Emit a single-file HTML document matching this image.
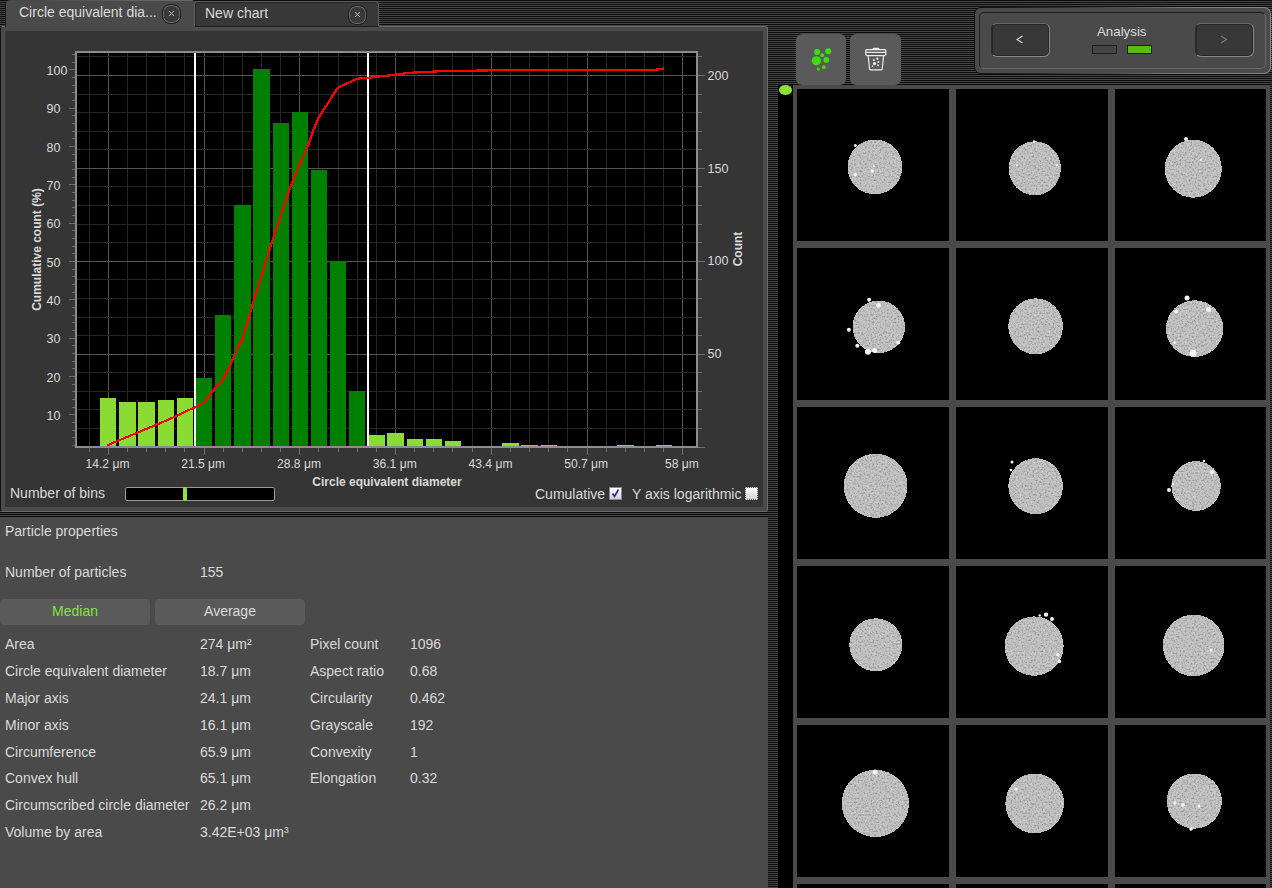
<!DOCTYPE html>
<html><head><meta charset="utf-8">
<style>
*{box-sizing:border-box}
html,body{margin:0;padding:0}
body{width:1272px;height:888px;overflow:hidden;position:relative;font-family:'Liberation Sans', sans-serif;color:#dadada;
background:repeating-linear-gradient(to bottom,#0b0b0b 0px,#0b0b0b 1px,#474747 1px,#474747 2px);}
.a{position:absolute}
.t{position:absolute;white-space:nowrap;font-size:14px;letter-spacing:0px;line-height:16px}
.cb{position:absolute;width:19px;height:20px;border-radius:8px;border:1px solid #1e1e1e;background:#393939;box-shadow:inset 0 0 0 1px #6a6a6a}
.cb svg{position:absolute;left:4.5px;top:4.5px}
.btn{position:absolute;border-radius:4px;background:#5a5a5a;text-align:center;font-size:14px;line-height:24px}
</style></head><body>

<div class="a" style="left:0px;top:26px;width:768px;height:486px;background:#4b4b4b;border-radius:3px;border:1px solid #6a6a6a;border-left-color:#141414"></div>
<div class="a" style="left:5px;top:31px;width:758px;height:476px;background:#353535"></div>
<div class="a" style="left:5px;top:0px;width:190px;height:27px;background:#1a1a1a;border-radius:5px 5px 0 0"></div>
<div class="a" style="left:6px;top:0px;width:189px;height:31px;border-radius:4px 4px 0 0;background:linear-gradient(to right,#404040,#5a5a5a 50%,#6c6c6c) top left/100% 1px no-repeat,#4a4a4a"></div>
<div class="t" style="left:19px;top:4px">Circle equivalent dia...</div>
<div class="cb" style="left:162px;top:4px"><svg width="7" height="7"><path d="M1 1 L6 6 M6 1 L1 6" stroke="#d0d0d0" stroke-width="0.9"/></svg></div>
<div class="a" style="left:194px;top:1px;width:185px;height:26px;background:#383838;border-radius:4px 4px 0 0;border:1px solid #5e5e5e;border-bottom:1px solid #1c1c1c;box-shadow:inset 1px 1px 0 #252525"></div>
<div class="t" style="left:205px;top:5px">New chart</div>
<div class="cb" style="left:348px;top:5px"><svg width="7" height="7"><path d="M1 1 L6 6 M6 1 L1 6" stroke="#d0d0d0" stroke-width="0.9"/></svg></div>
<svg width="770" height="512" style="position:absolute;left:0;top:0" font-family="Liberation Sans, sans-serif"><rect x="75" y="51" width="623" height="397" fill="#000"/><rect x="89" y="53" width="1" height="395" fill="#262626"/><rect x="108" y="53" width="1" height="395" fill="#555"/><rect x="127" y="53" width="1" height="395" fill="#262626"/><rect x="146" y="53" width="1" height="395" fill="#262626"/><rect x="165" y="53" width="1" height="395" fill="#262626"/><rect x="184" y="53" width="1" height="395" fill="#262626"/><rect x="204" y="53" width="1" height="395" fill="#555"/><rect x="223" y="53" width="1" height="395" fill="#262626"/><rect x="242" y="53" width="1" height="395" fill="#262626"/><rect x="261" y="53" width="1" height="395" fill="#262626"/><rect x="280" y="53" width="1" height="395" fill="#262626"/><rect x="299" y="53" width="1" height="395" fill="#555"/><rect x="318" y="53" width="1" height="395" fill="#262626"/><rect x="338" y="53" width="1" height="395" fill="#262626"/><rect x="357" y="53" width="1" height="395" fill="#262626"/><rect x="376" y="53" width="1" height="395" fill="#262626"/><rect x="395" y="53" width="1" height="395" fill="#555"/><rect x="414" y="53" width="1" height="395" fill="#262626"/><rect x="433" y="53" width="1" height="395" fill="#262626"/><rect x="452" y="53" width="1" height="395" fill="#262626"/><rect x="472" y="53" width="1" height="395" fill="#262626"/><rect x="491" y="53" width="1" height="395" fill="#555"/><rect x="510" y="53" width="1" height="395" fill="#262626"/><rect x="529" y="53" width="1" height="395" fill="#262626"/><rect x="548" y="53" width="1" height="395" fill="#262626"/><rect x="567" y="53" width="1" height="395" fill="#262626"/><rect x="587" y="53" width="1" height="395" fill="#555"/><rect x="606" y="53" width="1" height="395" fill="#262626"/><rect x="625" y="53" width="1" height="395" fill="#262626"/><rect x="644" y="53" width="1" height="395" fill="#262626"/><rect x="663" y="53" width="1" height="395" fill="#262626"/><rect x="682" y="53" width="1" height="395" fill="#555"/><rect x="77" y="56" width="621" height="1" fill="#262626"/><rect x="77" y="75" width="621" height="1" fill="#555"/><rect x="77" y="94" width="621" height="1" fill="#262626"/><rect x="77" y="112" width="621" height="1" fill="#262626"/><rect x="77" y="131" width="621" height="1" fill="#262626"/><rect x="77" y="149" width="621" height="1" fill="#262626"/><rect x="77" y="168" width="621" height="1" fill="#555"/><rect x="77" y="186" width="621" height="1" fill="#262626"/><rect x="77" y="205" width="621" height="1" fill="#262626"/><rect x="77" y="224" width="621" height="1" fill="#262626"/><rect x="77" y="242" width="621" height="1" fill="#262626"/><rect x="77" y="261" width="621" height="1" fill="#555"/><rect x="77" y="279" width="621" height="1" fill="#262626"/><rect x="77" y="298" width="621" height="1" fill="#262626"/><rect x="77" y="317" width="621" height="1" fill="#262626"/><rect x="77" y="335" width="621" height="1" fill="#262626"/><rect x="77" y="354" width="621" height="1" fill="#555"/><rect x="77" y="372" width="621" height="1" fill="#262626"/><rect x="77" y="391" width="621" height="1" fill="#262626"/><rect x="77" y="409" width="621" height="1" fill="#262626"/><rect x="77" y="428" width="621" height="1" fill="#262626"/><rect x="77" y="447" width="621" height="1" fill="#555"/><rect x="100" y="398" width="16" height="48" fill="#8bdc32"/><rect x="119" y="402" width="17" height="44" fill="#8bdc32"/><rect x="138" y="402" width="17" height="44" fill="#8bdc32"/><rect x="158" y="400" width="16" height="46" fill="#8bdc32"/><rect x="177" y="398" width="16" height="48" fill="#8bdc32"/><rect x="196" y="378" width="16" height="68" fill="#008000"/><rect x="215" y="315" width="16" height="131" fill="#008000"/><rect x="234" y="205" width="17" height="241" fill="#008000"/><rect x="253" y="69" width="17" height="377" fill="#008000"/><rect x="273" y="123" width="16" height="323" fill="#008000"/><rect x="292" y="112" width="16" height="334" fill="#008000"/><rect x="311" y="170" width="16" height="276" fill="#008000"/><rect x="330" y="261" width="16" height="185" fill="#008000"/><rect x="349" y="391" width="16" height="55" fill="#008000"/><rect x="369" y="435" width="16" height="11" fill="#8bdc32"/><rect x="387" y="433" width="17" height="13" fill="#8bdc32"/><rect x="407" y="439" width="16" height="7" fill="#8bdc32"/><rect x="426" y="439" width="16" height="7" fill="#8bdc32"/><rect x="445" y="441" width="16" height="5" fill="#8bdc32"/><rect x="502" y="443" width="17" height="3" fill="#8bdc32"/><rect x="521" y="445" width="17" height="1" fill="#8bdc32"/><rect x="541" y="445" width="16" height="1" fill="#8bdc32"/><rect x="617" y="445" width="17" height="1" fill="#8bdc32"/><rect x="656" y="445" width="16" height="1" fill="#8bdc32"/><rect x="194" y="53" width="2" height="393" fill="#fff"/><rect x="367" y="53" width="2" height="393" fill="#fff"/><polyline fill="none" stroke="#ff0000" stroke-width="2.2" stroke-linejoin="round" shape-rendering="crispEdges" points="107.2,445.3 168.6,419.6 193.6,407.8 196.4,406.9 203.5,402.6 207.3,398.4 214.3,389 223,379.7 229.4,367.3 233.8,356.8 241.9,339.9 246.6,325.7 250.7,310.8 254,300 270.3,247.6 290.5,186.8 298.6,166.6 308.7,144.3 313.8,128.9 318.2,118.5 323.2,110.3 337.7,87.9 356.5,78.9 361.6,78.2 370.4,78.2 372.3,77 380.4,76.4 390.5,75.3 399.3,74.1 410,72.8 423.8,72 444,71.1 520.9,69.9 654.1,69.9 663.8,68.5"/><rect x="76" y="52" width="621" height="395" fill="none" stroke="#8c8c8c" stroke-width="2"/><rect x="72" y="54" width="3" height="1" fill="#6e6e6e"/><rect x="72" y="62" width="3" height="1" fill="#6e6e6e"/><rect x="69" y="69" width="6" height="1" fill="#6e6e6e"/><rect x="72" y="77" width="3" height="1" fill="#6e6e6e"/><rect x="72" y="85" width="3" height="1" fill="#6e6e6e"/><rect x="72" y="92" width="3" height="1" fill="#6e6e6e"/><rect x="72" y="100" width="3" height="1" fill="#6e6e6e"/><rect x="69" y="108" width="6" height="1" fill="#6e6e6e"/><rect x="72" y="115" width="3" height="1" fill="#6e6e6e"/><rect x="72" y="123" width="3" height="1" fill="#6e6e6e"/><rect x="72" y="131" width="3" height="1" fill="#6e6e6e"/><rect x="72" y="138" width="3" height="1" fill="#6e6e6e"/><rect x="69" y="146" width="6" height="1" fill="#6e6e6e"/><rect x="72" y="154" width="3" height="1" fill="#6e6e6e"/><rect x="72" y="161" width="3" height="1" fill="#6e6e6e"/><rect x="72" y="169" width="3" height="1" fill="#6e6e6e"/><rect x="72" y="177" width="3" height="1" fill="#6e6e6e"/><rect x="69" y="184" width="6" height="1" fill="#6e6e6e"/><rect x="72" y="192" width="3" height="1" fill="#6e6e6e"/><rect x="72" y="200" width="3" height="1" fill="#6e6e6e"/><rect x="72" y="207" width="3" height="1" fill="#6e6e6e"/><rect x="72" y="215" width="3" height="1" fill="#6e6e6e"/><rect x="69" y="223" width="6" height="1" fill="#6e6e6e"/><rect x="72" y="230" width="3" height="1" fill="#6e6e6e"/><rect x="72" y="238" width="3" height="1" fill="#6e6e6e"/><rect x="72" y="246" width="3" height="1" fill="#6e6e6e"/><rect x="72" y="253" width="3" height="1" fill="#6e6e6e"/><rect x="69" y="261" width="6" height="1" fill="#6e6e6e"/><rect x="72" y="269" width="3" height="1" fill="#6e6e6e"/><rect x="72" y="276" width="3" height="1" fill="#6e6e6e"/><rect x="72" y="284" width="3" height="1" fill="#6e6e6e"/><rect x="72" y="292" width="3" height="1" fill="#6e6e6e"/><rect x="69" y="299" width="6" height="1" fill="#6e6e6e"/><rect x="72" y="307" width="3" height="1" fill="#6e6e6e"/><rect x="72" y="315" width="3" height="1" fill="#6e6e6e"/><rect x="72" y="322" width="3" height="1" fill="#6e6e6e"/><rect x="72" y="330" width="3" height="1" fill="#6e6e6e"/><rect x="69" y="338" width="6" height="1" fill="#6e6e6e"/><rect x="72" y="345" width="3" height="1" fill="#6e6e6e"/><rect x="72" y="353" width="3" height="1" fill="#6e6e6e"/><rect x="72" y="361" width="3" height="1" fill="#6e6e6e"/><rect x="72" y="368" width="3" height="1" fill="#6e6e6e"/><rect x="69" y="376" width="6" height="1" fill="#6e6e6e"/><rect x="72" y="384" width="3" height="1" fill="#6e6e6e"/><rect x="72" y="391" width="3" height="1" fill="#6e6e6e"/><rect x="72" y="399" width="3" height="1" fill="#6e6e6e"/><rect x="72" y="407" width="3" height="1" fill="#6e6e6e"/><rect x="69" y="414" width="6" height="1" fill="#6e6e6e"/><rect x="72" y="422" width="3" height="1" fill="#6e6e6e"/><rect x="72" y="430" width="3" height="1" fill="#6e6e6e"/><rect x="72" y="437" width="3" height="1" fill="#6e6e6e"/><rect x="72" y="445" width="3" height="1" fill="#6e6e6e"/><text x="46.5" y="75.1" font-size="12.5" fill="#dadada">100</text><text x="46.5" y="113.4" font-size="12.5" fill="#dadada">90</text><text x="46.5" y="151.8" font-size="12.5" fill="#dadada">80</text><text x="46.5" y="190.1" font-size="12.5" fill="#dadada">70</text><text x="46.5" y="228.4" font-size="12.5" fill="#dadada">60</text><text x="46.5" y="266.8" font-size="12.5" fill="#dadada">50</text><text x="46.5" y="305.1" font-size="12.5" fill="#dadada">40</text><text x="46.5" y="343.4" font-size="12.5" fill="#dadada">30</text><text x="46.5" y="381.7" font-size="12.5" fill="#dadada">20</text><text x="46.5" y="420.1" font-size="12.5" fill="#dadada">10</text><rect x="698" y="56" width="4" height="1" fill="#6e6e6e"/><rect x="698" y="75" width="7" height="1" fill="#6e6e6e"/><rect x="698" y="94" width="4" height="1" fill="#6e6e6e"/><rect x="698" y="112" width="4" height="1" fill="#6e6e6e"/><rect x="698" y="131" width="4" height="1" fill="#6e6e6e"/><rect x="698" y="149" width="4" height="1" fill="#6e6e6e"/><rect x="698" y="168" width="7" height="1" fill="#6e6e6e"/><rect x="698" y="186" width="4" height="1" fill="#6e6e6e"/><rect x="698" y="205" width="4" height="1" fill="#6e6e6e"/><rect x="698" y="224" width="4" height="1" fill="#6e6e6e"/><rect x="698" y="242" width="4" height="1" fill="#6e6e6e"/><rect x="698" y="261" width="7" height="1" fill="#6e6e6e"/><rect x="698" y="279" width="4" height="1" fill="#6e6e6e"/><rect x="698" y="298" width="4" height="1" fill="#6e6e6e"/><rect x="698" y="317" width="4" height="1" fill="#6e6e6e"/><rect x="698" y="335" width="4" height="1" fill="#6e6e6e"/><rect x="698" y="354" width="7" height="1" fill="#6e6e6e"/><rect x="698" y="372" width="4" height="1" fill="#6e6e6e"/><rect x="698" y="391" width="4" height="1" fill="#6e6e6e"/><rect x="698" y="409" width="4" height="1" fill="#6e6e6e"/><rect x="698" y="428" width="4" height="1" fill="#6e6e6e"/><rect x="698" y="447" width="7" height="1" fill="#6e6e6e"/><text x="707.5" y="79.6" font-size="12.5" fill="#dadada">200</text><text x="707.5" y="172.5" font-size="12.5" fill="#dadada">150</text><text x="707.5" y="265.4" font-size="12.5" fill="#dadada">100</text><text x="707.5" y="358.3" font-size="12.5" fill="#dadada">50</text><rect x="89" y="448" width="1" height="4" fill="#6e6e6e"/><rect x="108" y="448" width="1" height="7" fill="#6e6e6e"/><rect x="127" y="448" width="1" height="4" fill="#6e6e6e"/><rect x="146" y="448" width="1" height="4" fill="#6e6e6e"/><rect x="165" y="448" width="1" height="4" fill="#6e6e6e"/><rect x="184" y="448" width="1" height="4" fill="#6e6e6e"/><rect x="204" y="448" width="1" height="7" fill="#6e6e6e"/><rect x="223" y="448" width="1" height="4" fill="#6e6e6e"/><rect x="242" y="448" width="1" height="4" fill="#6e6e6e"/><rect x="261" y="448" width="1" height="4" fill="#6e6e6e"/><rect x="280" y="448" width="1" height="4" fill="#6e6e6e"/><rect x="299" y="448" width="1" height="7" fill="#6e6e6e"/><rect x="318" y="448" width="1" height="4" fill="#6e6e6e"/><rect x="338" y="448" width="1" height="4" fill="#6e6e6e"/><rect x="357" y="448" width="1" height="4" fill="#6e6e6e"/><rect x="376" y="448" width="1" height="4" fill="#6e6e6e"/><rect x="395" y="448" width="1" height="7" fill="#6e6e6e"/><rect x="414" y="448" width="1" height="4" fill="#6e6e6e"/><rect x="433" y="448" width="1" height="4" fill="#6e6e6e"/><rect x="452" y="448" width="1" height="4" fill="#6e6e6e"/><rect x="472" y="448" width="1" height="4" fill="#6e6e6e"/><rect x="491" y="448" width="1" height="7" fill="#6e6e6e"/><rect x="510" y="448" width="1" height="4" fill="#6e6e6e"/><rect x="529" y="448" width="1" height="4" fill="#6e6e6e"/><rect x="548" y="448" width="1" height="4" fill="#6e6e6e"/><rect x="567" y="448" width="1" height="4" fill="#6e6e6e"/><rect x="587" y="448" width="1" height="7" fill="#6e6e6e"/><rect x="606" y="448" width="1" height="4" fill="#6e6e6e"/><rect x="625" y="448" width="1" height="4" fill="#6e6e6e"/><rect x="644" y="448" width="1" height="4" fill="#6e6e6e"/><rect x="663" y="448" width="1" height="4" fill="#6e6e6e"/><rect x="682" y="448" width="1" height="7" fill="#6e6e6e"/><text x="107.5" y="467.6" text-anchor="middle" font-size="12.1" fill="#dadada">14.2 μm</text><text x="203.2" y="467.6" text-anchor="middle" font-size="12.1" fill="#dadada">21.5 μm</text><text x="299.0" y="467.6" text-anchor="middle" font-size="12.1" fill="#dadada">28.8 μm</text><text x="394.8" y="467.6" text-anchor="middle" font-size="12.1" fill="#dadada">36.1 μm</text><text x="490.5" y="467.6" text-anchor="middle" font-size="12.1" fill="#dadada">43.4 μm</text><text x="586.2" y="467.6" text-anchor="middle" font-size="12.1" fill="#dadada">50.7 μm</text><text x="682.0" y="467.6" text-anchor="middle" font-size="12.1" fill="#dadada">58 μm</text><text x="387" y="485.5" text-anchor="middle" font-size="12" font-weight="bold" fill="#dadada">Circle equivalent diameter</text><text transform="translate(41.2,249.5) rotate(-90)" text-anchor="middle" font-size="12" font-weight="bold" fill="#dadada">Cumulative count (%)</text><text transform="translate(742,249) rotate(-90)" text-anchor="middle" font-size="12" font-weight="bold" fill="#dadada">Count</text></svg>
<div class="t" style="left:10px;top:485px">Number of bins</div>
<div class="a" style="left:125px;top:487px;width:150px;height:14px;background:#000;border:1px solid #9a9a9a;border-radius:2px"></div>
<div class="a" style="left:183px;top:487px;width:4px;height:14px;background:#8ce33a;border-radius:2px"></div>
<div class="t" style="left:535px;top:486px">Cumulative</div>
<div class="a" style="left:609px;top:487px;width:13px;height:13px;background:linear-gradient(#fff,#cfd3da);border:1px solid #8a8a8a"><svg width="11" height="11" style="position:absolute;left:0;top:0"><path d="M2.5 5.5 L4.5 8.5 L8.5 1.5" stroke="#2a2a9a" stroke-width="1.6" fill="none"/></svg></div>
<div class="t" style="left:632px;top:486px">Y axis logarithmic</div>
<div class="a" style="left:745px;top:487px;width:13px;height:13px;background:linear-gradient(#fff,#cfd3da);border:1px dotted #555"></div>
<div class="a" style="left:0;top:517px;width:768px;height:371px;background:#4a4a4a"></div>
<div class="t" style="left:5px;top:523px">Particle properties</div>
<div class="t" style="left:5px;top:564px">Number of particles</div>
<div class="t" style="left:200px;top:564px">155</div>
<div class="btn" style="left:0;top:599px;width:150px;height:26px;color:#84e43a">Median</div>
<div class="btn" style="left:155px;top:599px;width:150px;height:26px;color:#dadada">Average</div>
<div class="t" style="left:5px;top:636.0px">Area</div>
<div class="t" style="left:200px;top:636.0px">274 μm²</div>
<div class="t" style="left:310px;top:636.0px">Pixel count</div>
<div class="t" style="left:410px;top:636.0px">1096</div>
<div class="t" style="left:5px;top:662.9px">Circle equivalent diameter</div>
<div class="t" style="left:200px;top:662.9px">18.7 μm</div>
<div class="t" style="left:310px;top:662.9px">Aspect ratio</div>
<div class="t" style="left:410px;top:662.9px">0.68</div>
<div class="t" style="left:5px;top:689.7px">Major axis</div>
<div class="t" style="left:200px;top:689.7px">24.1 μm</div>
<div class="t" style="left:310px;top:689.7px">Circularity</div>
<div class="t" style="left:410px;top:689.7px">0.462</div>
<div class="t" style="left:5px;top:716.6px">Minor axis</div>
<div class="t" style="left:200px;top:716.6px">16.1 μm</div>
<div class="t" style="left:310px;top:716.6px">Grayscale</div>
<div class="t" style="left:410px;top:716.6px">192</div>
<div class="t" style="left:5px;top:743.5px">Circumference</div>
<div class="t" style="left:200px;top:743.5px">65.9 μm</div>
<div class="t" style="left:310px;top:743.5px">Convexity</div>
<div class="t" style="left:410px;top:743.5px">1</div>
<div class="t" style="left:5px;top:770.4px">Convex hull</div>
<div class="t" style="left:200px;top:770.4px">65.1 μm</div>
<div class="t" style="left:310px;top:770.4px">Elongation</div>
<div class="t" style="left:410px;top:770.4px">0.32</div>
<div class="t" style="left:5px;top:797.2px">Circumscribed circle diameter</div>
<div class="t" style="left:200px;top:797.2px">26.2 μm</div>
<div class="t" style="left:5px;top:824.1px">Volume by area</div>
<div class="t" style="left:200px;top:824.1px">3.42E+03 μm³</div>
<div class="a" style="left:796px;top:34px;width:50px;height:51px;background:#5a5a5a;border-radius:6px"></div>
<div class="a" style="left:850px;top:34px;width:51px;height:51px;background:#5a5a5a;border-radius:6px"></div>
<svg class="a" style="left:796px;top:34px" width="50" height="51"><g fill="#3edc0c"><circle cx="20.4" cy="26.8" r="4.6"/><circle cx="21.1" cy="17.9" r="3"/><circle cx="32.2" cy="17.2" r="3"/><circle cx="26.1" cy="21.2" r="2"/><circle cx="30.3" cy="25.9" r="2.9"/><circle cx="27.8" cy="33.2" r="2"/><circle cx="22.3" cy="35.1" r="1.6"/></g></svg>
<svg class="a" style="left:850px;top:34px" width="51" height="51"><g fill="none" stroke="#ececec" stroke-width="1.2" stroke-linejoin="round"><path d="M17 21.6 L15.8 20.8 L15.8 16.6 Q15.8 15.6 16.8 15.6 L34.8 15.6 Q35.8 15.6 35.8 16.6 L35.8 20.8 L34.6 21.6 Z"/><path d="M15.8 18.4 L35.8 18.4"/><path d="M22.4 15.6 L23.6 14.4 L28.4 14.4 L29.6 15.6"/><path d="M18.2 21.8 L19.6 35.2 Q19.7 35.8 20.3 35.8 L31.5 35.8 Q32.1 35.8 32.2 35.2 L33.6 21.8"/></g><g fill="#ececec"><circle cx="24.5" cy="29.6" r="1.6"/><circle cx="23.9" cy="26" r="1"/><circle cx="27.3" cy="24.7" r="1.1"/><circle cx="28.3" cy="27.9" r="1"/><circle cx="28.1" cy="31.2" r="1"/><circle cx="22.4" cy="32.1" r="0.8"/></g></svg>
<div class="a" style="left:974px;top:7px;width:297px;height:67px;border-radius:7px;background:linear-gradient(100deg,#111 0%,#2a2a2a 25%,#7a7a7a 70%,#8a8a8a 100%)"></div>
<div class="a" style="left:975px;top:8px;width:295px;height:65px;background:#4a4a4a;border-radius:6px"></div>
<div class="a" style="left:979px;top:12px;width:287px;height:57px;border-radius:5px;border:1px solid #1e1e1e;border-right-color:#6a6a6a;border-bottom-color:#6a6a6a"></div>
<div class="a" style="left:991px;top:23px;width:59px;height:34px;background:#383838;border-radius:6px;border:1px solid #8a8a8a;border-left-color:#2a2a2a;border-top-color:#6a6a6a;box-shadow:inset 0 0 0 1px #262626"></div>
<div class="a" style="left:1195px;top:23px;width:59px;height:34px;background:#383838;border-radius:6px;border:1px solid #8a8a8a;border-left-color:#2a2a2a;border-top-color:#6a6a6a;box-shadow:inset 0 0 0 1px #262626"></div>
<svg class="a" style="left:1015px;top:35px" width="10" height="10"><path d="M7.5 1 L2 4.5 L7.5 8" stroke="#e0e0e0" stroke-width="1.1" fill="none"/></svg>
<svg class="a" style="left:1219px;top:35px" width="10" height="10"><path d="M2 1 L7.5 4.5 L2 8" stroke="#7a7a7a" stroke-width="1.1" fill="none"/></svg>
<div class="t" style="left:1097px;top:23.5px;font-size:13.3px">Analysis</div>
<div class="a" style="left:1092px;top:45px;width:25px;height:9px;background:#454545;border:1px solid #1e1e1e"></div>
<div class="a" style="left:1127px;top:45px;width:25px;height:9px;background:#5abc0c;border:1px solid #1e1e1e"></div>
<div class="a" style="left:778px;top:85px;width:15px;height:803px;background:#000"></div>
<div class="a" style="left:793px;top:85px;width:477px;height:803px;background:#4a4a4a"></div>
<div class="a" style="left:797px;top:89px;width:152px;height:152px;background:#000"></div>
<div class="a" style="left:956px;top:89px;width:152px;height:152px;background:#000"></div>
<div class="a" style="left:1115px;top:89px;width:151px;height:152px;background:#000"></div>
<div class="a" style="left:797px;top:248px;width:152px;height:152px;background:#000"></div>
<div class="a" style="left:956px;top:248px;width:152px;height:152px;background:#000"></div>
<div class="a" style="left:1115px;top:248px;width:151px;height:152px;background:#000"></div>
<div class="a" style="left:797px;top:407px;width:152px;height:152px;background:#000"></div>
<div class="a" style="left:956px;top:407px;width:152px;height:152px;background:#000"></div>
<div class="a" style="left:1115px;top:407px;width:151px;height:152px;background:#000"></div>
<div class="a" style="left:797px;top:566px;width:152px;height:152px;background:#000"></div>
<div class="a" style="left:956px;top:566px;width:152px;height:152px;background:#000"></div>
<div class="a" style="left:1115px;top:566px;width:151px;height:152px;background:#000"></div>
<div class="a" style="left:797px;top:725px;width:152px;height:152px;background:#000"></div>
<div class="a" style="left:956px;top:725px;width:152px;height:152px;background:#000"></div>
<div class="a" style="left:1115px;top:725px;width:151px;height:152px;background:#000"></div>
<div class="a" style="left:797px;top:884px;width:152px;height:4px;background:#000"></div>
<div class="a" style="left:956px;top:884px;width:152px;height:4px;background:#000"></div>
<div class="a" style="left:1115px;top:884px;width:151px;height:4px;background:#000"></div>
<div class="a" style="left:779px;top:85px;width:13px;height:10px;border-radius:48%;background:#8ae034"></div>
<svg class="a" style="left:0;top:0" width="1272" height="888"><defs><filter id="nz" x="-5%" y="-5%" width="110%" height="110%" color-interpolation-filters="sRGB"><feTurbulence type="fractalNoise" baseFrequency="0.55" numOctaves="2" seed="7" result="n"/><feColorMatrix in="n" type="matrix" values="0.4 0 0 0 0.31  0.4 0 0 0 0.31  0.4 0 0 0 0.31  0 0 0 0 1" result="g"/><feComposite in="g" in2="SourceAlpha" operator="in" result="gc"/><feBlend in="SourceGraphic" in2="gc" mode="overlay"/></filter></defs><g filter="url(#nz)"><ellipse cx="874.9" cy="166.9" rx="27.4" ry="27.4" fill="#bdbdbd" shape-rendering="crispEdges"/><ellipse cx="1034.8" cy="168.3" rx="26.1" ry="27" fill="#bdbdbd" shape-rendering="crispEdges"/><ellipse cx="1193.3" cy="168.7" rx="28.5" ry="29" fill="#bdbdbd" shape-rendering="crispEdges"/><ellipse cx="878.8" cy="326.8" rx="26.2" ry="26.2" fill="#bdbdbd" shape-rendering="crispEdges"/><ellipse cx="1035.6" cy="326.4" rx="27.3" ry="28" fill="#bdbdbd" shape-rendering="crispEdges"/><ellipse cx="1194.6" cy="328.6" rx="28.7" ry="28.3" fill="#bdbdbd" shape-rendering="crispEdges"/><ellipse cx="875.6" cy="485.8" rx="31.9" ry="32.1" fill="#bdbdbd" shape-rendering="crispEdges"/><ellipse cx="1035.6" cy="486.2" rx="27.3" ry="28" fill="#bdbdbd" shape-rendering="crispEdges"/><ellipse cx="1196.1" cy="486" rx="24.7" ry="24.9" fill="#bdbdbd" shape-rendering="crispEdges"/><ellipse cx="875.8" cy="644.8" rx="26.5" ry="26.5" fill="#bdbdbd" shape-rendering="crispEdges"/><ellipse cx="1034.1" cy="646.1" rx="29.5" ry="29.7" fill="#bdbdbd" shape-rendering="crispEdges"/><ellipse cx="1193.7" cy="645.4" rx="30.8" ry="30.8" fill="#bdbdbd" shape-rendering="crispEdges"/><ellipse cx="875.4" cy="803.4" rx="33.6" ry="33.6" fill="#bdbdbd" shape-rendering="crispEdges"/><ellipse cx="1034.7" cy="803.4" rx="29.3" ry="29.9" fill="#bdbdbd" shape-rendering="crispEdges"/><ellipse cx="1194.3" cy="801.1" rx="27.6" ry="27.6" fill="#bdbdbd" shape-rendering="crispEdges"/></g><circle cx="855.4" cy="174.5" r="1.7" fill="#f4f4f4"/><circle cx="872.3" cy="171" r="1.8" fill="#f4f4f4"/><circle cx="855.4" cy="145.4" r="1.5" fill="#f4f4f4"/><circle cx="873.9" cy="166.2" r="1" fill="#f4f4f4"/><circle cx="1034" cy="141.5" r="1.2" fill="#f4f4f4"/><circle cx="1017" cy="165" r="1" fill="#f4f4f4"/><circle cx="1057" cy="165" r="1.2" fill="#f4f4f4"/><circle cx="1186" cy="139" r="2" fill="#f4f4f4"/><circle cx="1201" cy="160" r="1" fill="#f4f4f4"/><circle cx="869.1" cy="299.7" r="2" fill="#f4f4f4"/><circle cx="878.4" cy="305.2" r="2.3" fill="#f4f4f4"/><circle cx="848.9" cy="329.7" r="2" fill="#f4f4f4"/><circle cx="857.3" cy="345.7" r="2" fill="#f4f4f4"/><circle cx="867.9" cy="351.7" r="3" fill="#f4f4f4"/><circle cx="874.6" cy="350.4" r="2.5" fill="#f4f4f4"/><circle cx="898.3" cy="342.4" r="2" fill="#f4f4f4"/><circle cx="1187" cy="298" r="2.5" fill="#f4f4f4"/><circle cx="1208.6" cy="309.4" r="2.5" fill="#f4f4f4"/><circle cx="1176" cy="311.5" r="2" fill="#f4f4f4"/><circle cx="1193" cy="353.3" r="3.5" fill="#f4f4f4"/><circle cx="1174.8" cy="342.8" r="1.2" fill="#f4f4f4"/><circle cx="1012" cy="462" r="1.5" fill="#f4f4f4"/><circle cx="1011" cy="470" r="1.3" fill="#f4f4f4"/><circle cx="1169" cy="490" r="2" fill="#f4f4f4"/><circle cx="1173" cy="484" r="1.5" fill="#f4f4f4"/><circle cx="1212" cy="472" r="2" fill="#f4f4f4"/><circle cx="1204" cy="461" r="1.2" fill="#f4f4f4"/><circle cx="1046" cy="614.6" r="2.2" fill="#f4f4f4"/><circle cx="1052" cy="618.9" r="2" fill="#f4f4f4"/><circle cx="1039.7" cy="615.5" r="1.2" fill="#f4f4f4"/><circle cx="1057.9" cy="654.8" r="1.8" fill="#f4f4f4"/><circle cx="1059.5" cy="661.5" r="1.8" fill="#f4f4f4"/><circle cx="1211" cy="650" r="1.5" fill="#f4f4f4"/><circle cx="875" cy="772" r="2.5" fill="#f4f4f4"/><circle cx="1016" cy="789" r="1.8" fill="#f4f4f4"/><circle cx="1175" cy="803" r="1.8" fill="#f4f4f4"/><circle cx="1183" cy="805" r="1.8" fill="#f4f4f4"/><circle cx="1191" cy="829" r="1.8" fill="#f4f4f4"/><circle cx="1199" cy="806" r="1.5" fill="#f4f4f4"/></svg>
</body></html>
